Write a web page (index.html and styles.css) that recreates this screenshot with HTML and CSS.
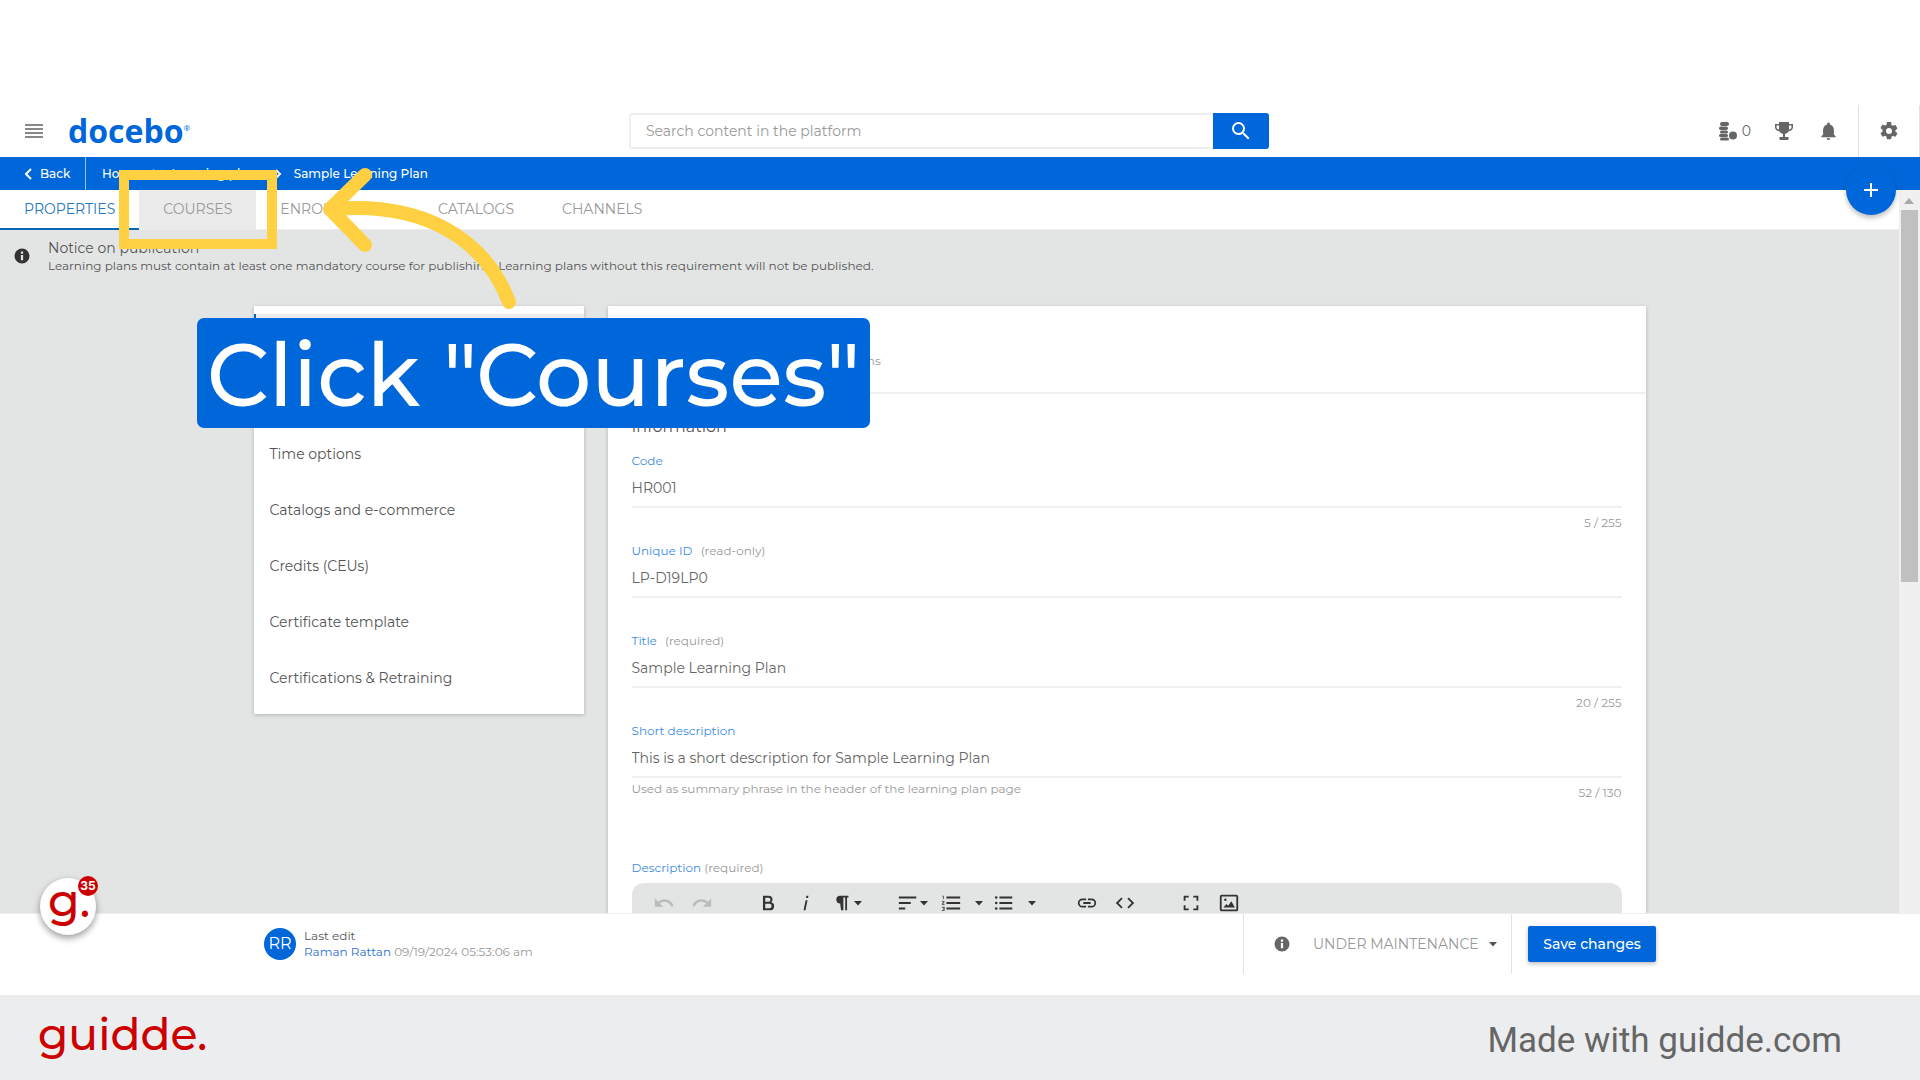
FILE: index.html
```html
<!DOCTYPE html>
<html lang="en">
<head>
<meta charset="utf-8">
<title>Sample Learning Plan</title>
<link rel="stylesheet" href="styles.css">
</head>
<body>
<svg class="sprite" aria-hidden="true">
  <symbol id="i-info" viewBox="0 0 24 24"><path d="M12 2a10 10 0 1 0 0 20 10 10 0 0 0 0-20zm1.500 15.500h-3v-7h3zm0-8.500h-3V6h3z"/></symbol>
  <symbol id="i-caret" viewBox="0 0 10 10"><path d="M1 3h8L5 7.500z"/></symbol>
  <symbol id="i-chevron" viewBox="0 0 10 14"><path d="M3 3l4 4-4 4" fill="none" stroke="currentColor" stroke-width="2"/></symbol>
</svg>

<div class="page">
  <header class="topbar">
    <div class="brand">
      <button class="icon-btn menu" type="button" aria-label="Menu">
        <svg viewBox="0 0 18 14" width="18" height="14"><path d="M0 0h18v2H0zM0 4h18v2H0zM0 8h18v2H0zM0 12h18v2H0z"/></svg>
      </button>
      <a class="logo" href="#">docebo<sup>®</sup></a>
    </div>
    <form class="search">
      <input type="search" aria-label="Search" placeholder="Search content in the platform">
      <button type="button" aria-label="Submit search">
        <svg viewBox="0 0 24 24" width="24" height="24"><path d="M15.500 14h-.790l-.280-.270A6.470 6.470 0 0 0 16 9.500 6.500 6.500 0 1 0 9.500 16c1.610 0 3.090-.590 4.230-1.570l.270.280v.790l5 4.990L20.490 19l-4.990-5zm-6 0a4.500 4.500 0 1 1 0-9 4.500 4.500 0 0 1 0 9z"/></svg>
      </button>
    </form>
    <div class="tools">
      <button class="icon-btn coins" type="button">
        <svg viewBox="0 0 18 20" width="18" height="20"><rect x="1" y="1" width="9" height="4" rx="2"/><rect x="0" y="5.500" width="9" height="3.500" rx="1.700"/><rect x="1" y="9.500" width="8" height="3" rx="1.500"/><rect x="0" y="13" width="9" height="3" rx="1.500"/><rect x="1" y="16.500" width="9" height="3" rx="1.500"/><circle cx="14" cy="14.500" r="4"/></svg>
        <span>0</span>
      </button>
      <button class="icon-btn" type="button" aria-label="Leaderboard">
        <svg viewBox="0 0 18 18" width="18" height="18"><path d="M4 0h10v2h4v3c0 2.500-1.700 4-4.200 4.300A5 5 0 0 1 10 12v3h3.500v3h-9v-3H8v-3a5 5 0 0 1-3.800-2.700C1.700 9 0 7.500 0 5V2h4zM1.500 3.500V5c0 1.300.900 2.200 2.500 2.600V3.500zm15 0H14v4.100c1.600-.400 2.500-1.300 2.500-2.600z"/></svg>
      </button>
      <button class="icon-btn" type="button" aria-label="Notifications">
        <svg viewBox="4 2 16 20" width="15" height="18"><path d="M12 22a2 2 0 0 0 2-2h-4c0 1.100.890 2 2 2zm6-6v-5c0-3.070-1.640-5.640-4.500-6.320V4a1.500 1.500 0 0 0-3 0v.680C7.630 5.360 6 7.920 6 11v5l-2 2v1h16v-1z"/></svg>
      </button>
      <button class="icon-btn gear" type="button" aria-label="Settings">
        <svg viewBox="2 2 20 20" width="18" height="18"><path d="M19.140 12.940c.040-.300.060-.610.060-.940s-.020-.640-.070-.940l2.030-1.580a.490.490 0 0 0 .120-.610l-1.920-3.320a.488.488 0 0 0-.590-.220l-2.390.960a7.030 7.030 0 0 0-1.620-.940l-.360-2.540A.484.484 0 0 0 13.920 2h-3.840c-.240 0-.430.170-.470.410l-.360 2.540c-.590.240-1.130.570-1.620.940l-2.390-.960c-.220-.080-.470 0-.590.220L2.740 8.470c-.120.210-.080.470.120.610l2.030 1.580c-.050.300-.090.630-.090.940s.020.640.070.940l-2.030 1.580a.490.490 0 0 0-.120.610l1.920 3.320c.120.220.370.290.590.220l2.390-.960c.500.380 1.030.700 1.620.940l.360 2.540c.050.240.240.410.480.410h3.840c.240 0 .440-.170.470-.410l.360-2.540c.590-.240 1.130-.560 1.620-.940l2.390.960c.220.080.470 0 .590-.220l1.920-3.320a.490.490 0 0 0-.120-.610zM12 15.300a3.300 3.300 0 1 1 0-6.600 3.300 3.300 0 0 1 0 6.600z"/></svg>
      </button>
    </div>
  </header>

  <nav class="crumbs" aria-label="Breadcrumb">
    <a class="back" href="#"><svg viewBox="0 0 8 14" width="8" height="14"><path d="M7 2L2 7l5 5" fill="none" stroke="currentColor" stroke-width="2"/></svg>Back</a>
    <a href="#">Home</a>
    <svg class="sep"><use href="#i-chevron"/></svg>
    <a href="#">Learning plans</a>
    <svg class="sep"><use href="#i-chevron"/></svg>
    <a href="#">Sample Learning Plan</a>
    <button class="fab" type="button" aria-label="Add">
      <svg viewBox="0 0 14 14" width="14" height="14"><path d="M6 0h2v6h6v2H8v6H6V8H0V6h6z"/></svg>
    </button>
  </nav>

  <div class="workspace">
    <main class="content">
      <nav class="tabs" aria-label="Sections">
        <a class="tab active" href="#">PROPERTIES</a>
        <a class="tab hover" href="#">COURSES</a>
        <a class="tab" href="#">ENROLLMENTS</a>
        <a class="tab" href="#">CATALOGS</a>
        <a class="tab" href="#">CHANNELS</a>
      </nav>

      <section class="notice">
        <svg class="info dark"><use href="#i-info"/></svg>
        <div>
          <h2>Notice on publication</h2>
          <p>Learning plans must contain at least one mandatory course for publishing. Learning plans without this requirement will not be published.</p>
        </div>
      </section>

      <div class="columns">
        <ul class="card side">
          <li class="current"></li>
          <li></li>
          <li><a href="#">Time options</a></li>
          <li><a href="#">Catalogs and e-commerce</a></li>
          <li><a href="#">Credits (CEUs)</a></li>
          <li><a href="#">Certificate template</a></li>
          <li><a href="#">Certifications &amp; Retraining</a></li>
        </ul>

        <section class="card details">
          <header class="details-head"><p>Learning plan general details and options</p></header>
          <form class="fields">
            <h3>Information</h3>
            <div class="field">
              <label for="code">Code</label>
              <input id="code" type="text" value="HR001">
              <div class="foot"><span></span><span>5 / 255</span></div>
            </div>
            <div class="field">
              <label for="uid">Unique ID <span>(read-only)</span></label>
              <input id="uid" type="text" value="LP-D19LP0" readonly>
            </div>
            <div class="field">
              <label for="title">Title <span>(required)</span></label>
              <input id="title" type="text" value="Sample Learning Plan">
              <div class="foot"><span></span><span>20 / 255</span></div>
            </div>
            <div class="field tall">
              <label for="short">Short description</label>
              <input id="short" type="text" value="This is a short description for Sample Learning Plan">
              <div class="foot"><span class="help">Used as summary phrase in the header of the learning plan page</span><span>52 / 130</span></div>
            </div>
            <div class="label-row">Description <span>(required)</span></div>
            <div class="editor" role="toolbar" aria-label="Description formatting">
              <div class="group">
                <button class="dim" type="button" aria-label="Undo"><svg viewBox="0 0 24 24"><path d="M12.500 8c-2.650 0-5.050.990-6.900 2.600L2 7v9h9l-3.620-3.620A7.970 7.970 0 0 1 12.500 10.500c3.540 0 6.550 2.310 7.600 5.500l2.370-.780A10.530 10.530 0 0 0 12.500 8z"/></svg></button>
                <button class="dim" type="button" aria-label="Redo"><svg viewBox="0 0 24 24"><path d="M18.400 10.600A10.500 10.500 0 0 0 11.500 8a10.530 10.530 0 0 0-9.960 7.220L3.900 16a8.020 8.020 0 0 1 7.600-5.500c1.950 0 3.730.720 5.120 1.880L13 16h9V7z"/></svg></button>
              </div>
              <div class="group">
                <button type="button" aria-label="Bold"><svg viewBox="0 0 24 24"><path fill-rule="evenodd" d="M6.500 4h6.300a4.200 4.200 0 0 1 2.900 7.300A4.500 4.500 0 0 1 13.700 20H6.500zM9 6.300v4.200h3.600a2.100 2.100 0 0 0 0-4.200zm0 6.500v4.900h4.500a2.450 2.450 0 0 0 0-4.900z"/></svg></button>
                <button type="button" aria-label="Italic"><svg viewBox="0 0 24 24"><path d="M12.500 4h2.200l-.500 2.600H12zM11.600 9h2.100l-2.300 11H9.300z"/></svg></button>
                <button class="drop para" type="button" aria-label="Paragraph format"><svg viewBox="0 0 24 24"><path d="M10 12.500A4.200 4.200 0 0 1 10 4h9v2h-1.500v14h-2V6h-2v14H11z"/></svg><svg class="caret"><use href="#i-caret"/></svg></button>
              </div>
              <div class="group">
                <button class="drop" type="button" aria-label="Align"><svg viewBox="0 0 24 24"><path d="M2 19h7v-2H2zM2 5v2h19V5zm0 8h13v-2H2z"/></svg><svg class="caret"><use href="#i-caret"/></svg></button>
                <button class="split" type="button" aria-label="Ordered list"><svg viewBox="0 0 24 24"><path d="M7 5h15v2H7zM7 11h15v2H7zM7 17h15v2H7zM2.500 4H4v4h-.800V5h-.700zM2 10h3v.800L3.200 13H5v1H2v-.900L3.800 11H2zM2 16h3v4.500H2v-.800h2v-1H3v-.800h1v-1H2z"/></svg><svg class="caret"><use href="#i-caret"/></svg></button>
                <button class="split" type="button" aria-label="Unordered list"><svg viewBox="0 0 24 24"><path d="M7 5h14v2H7zM7 11h14v2H7zM7 17h14v2H7z"/><circle cx="3.500" cy="6" r="1.400"/><circle cx="3.500" cy="12" r="1.400"/><circle cx="3.500" cy="18" r="1.400"/></svg><svg class="caret"><use href="#i-caret"/></svg></button>
              </div>
              <div class="group">
                <button type="button" aria-label="Link"><svg viewBox="0 0 24 24"><path d="M3.900 12A3.100 3.100 0 0 1 7 8.900h4V7H7a5 5 0 0 0 0 10h4v-1.900H7A3.100 3.100 0 0 1 3.900 12zM8 13h8v-2H8zm9-6h-4v1.900h4a3.100 3.100 0 0 1 0 6.200h-4V17h4a5 5 0 0 0 0-10z"/></svg></button>
                <button type="button" aria-label="Code view"><svg viewBox="0 0 24 24"><path d="M9.400 16.600L4.800 12l4.600-4.600L8 6l-6 6 6 6zm5.200 0l4.600-4.600-4.600-4.600L16 6l6 6-6 6z"/></svg></button>
              </div>
              <div class="group">
                <button type="button" aria-label="Full screen"><svg viewBox="0 0 24 24"><path d="M6 14.500H4V20h5.500v-2H6zM4 9.500h2V6h3.500V4H4zM18 18h-3.500v2H20v-5.500h-2zM14.500 4v2H18v3.500h2V4z"/></svg></button>
                <button type="button" aria-label="Insert image"><svg viewBox="0 0 24 24"><path fill-rule="evenodd" d="M4 3h16a2 2 0 0 1 2 2v14a2 2 0 0 1-2 2H4a2 2 0 0 1-2-2V5a2 2 0 0 1 2-2zm0 2v14h16V5z"/><path d="M6 17l3-4 2 2 3.500-5 4 7z"/><circle cx="8" cy="8.500" r="1.300"/></svg></button>
              </div>
            </div>
          </form>
        </section>
      </div>
    </main>
    <div class="scrollbar" aria-hidden="true">
      <svg viewBox="0 0 20 20" width="20" height="20"><path d="M5 14h10l-5-6z"/></svg>
      <div class="thumb"></div>
    </div>
  </div>

  <footer class="savebar">
    <div class="savebar-inner">
      <span class="avatar">RR</span>
      <div class="edit">
        <div>Last edit</div>
        <div class="when"><a href="#">Raman Rattan</a> 09/19/2024 05:53:06 am</div>
      </div>
      <div class="status">
        <svg class="info"><use href="#i-info"/></svg>
        <button type="button">UNDER MAINTENANCE<svg class="caret"><use href="#i-caret"/></svg></button>
      </div>
      <button class="save" type="button">Save changes</button>
    </div>
    <button class="bubble" type="button">g.<span class="count">35</span></button>
  </footer>

  <div class="credit">
    <a class="guidde" href="#">guidde.</a>
    <a class="made" href="#">Made with guidde.com</a>
  </div>

  <div class="marker"></div>
  <div class="callout">Click "Courses"</div>
  <svg class="arrow" viewBox="0 0 200 150" width="200" height="150" aria-hidden="true"><path d="M45 15L10 49l35 36M14 49C100 42 164 76 189 142"/></svg>
</div>
</body>
</html>
```

FILE: styles.css
```css
* { box-sizing: border-box; }
body {
  margin: 0;
  background: #fff;
  color: #555;
  font: 14px/20px Montserrat, Inter, "Liberation Sans", sans-serif;
}
a { color: inherit; text-decoration: none; }
h2, h3, p, ul { margin: 0; padding: 0; font-weight: 400; }
ul { list-style: none; }
button, input { font: inherit; color: inherit; border: 0; padding: 0; margin: 0; background: none; outline: 0; }
svg { fill: currentColor; flex: none; }
.sprite { position: absolute; width: 0; height: 0; }
.caret { width: 10px; height: 10px; }

.page { position: relative; display: flex; flex-direction: column; height: 100vh; padding-top: 105px; overflow: hidden; }

.topbar { display: grid; grid-template-columns: calc(50% - 331px) 640px 1fr; height: 52px; align-items: center; flex: none; }
.brand { display: flex; align-items: center; padding-left: 25px; gap: 25px; }
.icon-btn { display: flex; align-items: center; color: #666; }
.menu { color: #888; }
.logo { color: #0067da; font: 700 32px/40px "Open Sans", sans-serif; }
.logo sup { font: 400 8px/8px "Open Sans", sans-serif; vertical-align: 12px; }
.search { display: flex; height: 36px; }
.search input { flex: 1; min-width: 0; border: 2px solid #efefef; border-right: 0; border-radius: 3px 0 0 3px; padding: 0 15px; }
.search input::placeholder { color: #999; opacity: 1; }
.search button { width: 56px; background: #0067da; color: #fff; border-radius: 0 3px 3px 0; display: grid; place-items: center; }
.tools { display: flex; justify-content: flex-end; align-items: center; gap: 28px; height: 100%; }
.coins { gap: 5px; margin-right: -4px; }
.gear { width: 62px; height: 100%; justify-content: center; border: solid #e2e2e2; border-width: 0 1px; margin-left: -6px; }

.crumbs { position: relative; z-index: 2; display: flex; align-items: center; gap: 11px; height: 33px; background: #0067da; color: #fff; flex: none; font-size: 12px; font-weight: 500; }
.back { display: flex; align-items: center; gap: 8px; height: 33px; width: 86px; padding-left: 24px; border-right: 1px solid #99c2f0; margin-right: 5px; }
.sep { width: 10px; height: 14px; }
.fab { position: absolute; right: 24px; top: 8px; width: 50px; height: 50px; border-radius: 50%; background: #0067da; display: grid; place-items: center; box-shadow: 0 3px 5px rgba(0, 0, 0, .25); }

.workspace { display: flex; flex: 1; min-height: 0; background: #e3e5e4; }
.content { flex: 1; min-width: 0; overflow: hidden; }
.scrollbar { width: 21px; background: #f0f0f0; color: #aaa; padding-right: 2px; }
.scrollbar svg { display: block; }
.thumb { height: 372px; margin-left: 2px; background: #c0c0c0; }

.tabs { display: flex; height: 40px; background: #fff; border-bottom: 1px solid #eee; color: #999; }
.tab { display: flex; align-items: center; padding: 0 24px 2px; height: 40px; }
.tab.active { color: #1f77c0; box-shadow: inset 0 -2px #0a66b0; }
.tab.hover { background: #ebebeb; }
.notice { display: flex; gap: 17px; align-items: center; height: 76px; padding: 0 13px 24px; }
.notice h2 { font-size: 14px; line-height: 20px; }
.notice p { font-size: 12px; line-height: 16px; }
.info { width: 18px; height: 18px; color: #666; }
.info.dark { color: #333; }

.columns { display: grid; grid-template-columns: 330px 1fr; gap: 24px; align-items: start; max-width: 1392px; margin: 0 auto; }
.card { background: #fff; box-shadow: 0 1px 4px rgba(0, 0, 0, .22); }
.side { padding: 8px 0; }
.side li { display: flex; align-items: center; height: 56px; padding: 0 16px; }
.side .current { background: #ebebeb; border-left: 2px solid #0a66b0; }
.details-head { height: 88px; border-bottom: 2px solid #f0f0f0; padding: 45px 24px 0; font-size: 12px; color: #999; }
.fields { padding: 23px 24px 24px; }
.fields h3 { font-size: 16px; line-height: 20px; margin-bottom: 16px; }
.field { display: flex; flex-direction: column; min-height: 90px; }
.field.tall { min-height: 137px; }
.field label, .label-row { font-size: 12px; line-height: 16px; color: #3d8be3; }
.field label span { margin-left: 5px; }
.field label span, .label-row span { color: #999; }
.field input { height: 39px; border-bottom: 2px solid #f0f0f0; color: #666; }
.foot { display: flex; justify-content: space-between; padding-top: 7px; font-size: 12px; line-height: 16px; color: #999; }
.help { margin-top: -4px; }
.editor { display: flex; gap: 28px; margin-top: 7px; height: 120px; padding: 0 13px; background: #e3e5e4; border-radius: 12px; color: #333; }
.group { display: flex; height: 40px; }
.group button { display: flex; align-items: center; justify-content: center; width: 38px; }
.group button svg { width: 22px; height: 22px; }
.group .drop, .group .split { justify-content: flex-start; width: 43px; }
.group .para { width: 44px; padding-left: 6px; }
.group .split { width: 53px; gap: 12px; }
.group .split:last-child { width: 47px; }
.group button .caret { width: 10px; height: 10px; }
.group .dim { color: #bbb; }

.savebar { position: relative; height: 82px; flex: none; background: #fff; border-top: 1px solid #eee; }
.savebar-inner { display: flex; max-width: 1392px; height: 60px; margin: 0 auto; align-items: center; }
.avatar { display: grid; place-items: center; width: 32px; height: 32px; border-radius: 50%; background: #0067da; color: #fff; font-size: 16px; }
.edit { flex: 1; padding-left: 8px; font-size: 12px; line-height: 16px; }
.when { color: #999; }
.when a { color: #2b6fd6; }
.status { display: flex; align-items: center; gap: 22px; width: 269px; height: 60px; padding-left: 29px; border: solid #e2e2e2; border-width: 0 1px; color: #999; }
.status button { display: flex; align-items: center; gap: 9px; }
.status .caret { color: #555; }
.save { width: 128px; height: 36px; margin-left: 16px; border-radius: 2px; background: #0067da; color: #fff; font-weight: 500; box-shadow: 0 2px 4px rgba(0, 0, 0, .25); }
.bubble { position: absolute; left: 40px; top: -36px; width: 56px; height: 57px; padding: 0 0 12px 2px; border-radius: 50%; background: #fff; color: #c00; font: 500 46px/44px Montserrat, Inter, sans-serif; box-shadow: 0 3px 7px rgba(0, 0, 0, .4); }
.count { position: absolute; right: -2px; top: -2px; width: 20px; height: 20px; border-radius: 50%; background: #c00; color: #fff; font: 700 12px/20px Inter, sans-serif; text-align: center; }

.credit { display: flex; justify-content: space-between; align-items: center; flex: none; height: 85px; padding: 0 78px 0 38px; background: #ecedef; }
.guidde { color: #c00; font: 500 44px/60px Montserrat, Inter, sans-serif; padding-bottom: 8px; }
.made { color: #666; font: 400 35px/42px Roboto, sans-serif; padding-top: 6px; }

.marker { position: absolute; left: 119px; top: 170px; z-index: 3; width: 158px; height: 79px; border: 10px solid #ffd042; }
.callout { position: absolute; left: 197px; top: 318px; z-index: 4; width: 673px; height: 110px; border-radius: 7px; background: #0067da; color: #fff; font-size: 87px; font-weight: 500; line-height: 114px; text-align: center; white-space: nowrap; }
.arrow { position: absolute; left: 320px; top: 160px; z-index: 4; fill: none; stroke: #ffd042; stroke-width: 14px; stroke-linecap: round; stroke-linejoin: round; }
```
